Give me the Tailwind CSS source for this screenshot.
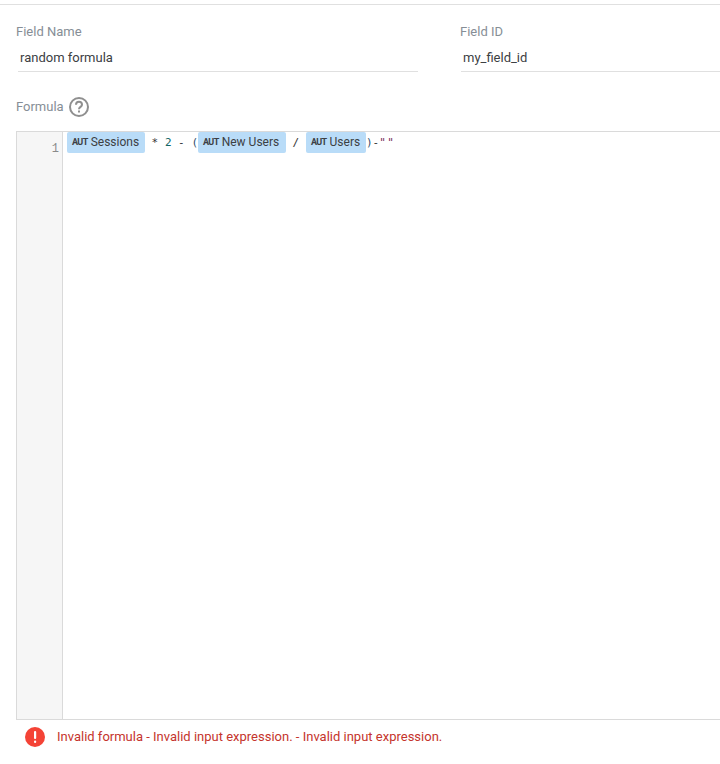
<!DOCTYPE html>
<html lang="en">
<head>
    <meta charset="UTF-8" />
    <title>Formula field</title>
    <script src="https://cdn.jsdelivr.net/npm/@tailwindcss/browser@4"></script>
</head>
<body class="bg-white h-[764px] w-[720px] overflow-hidden font-['Roboto',sans-serif]">

    <div class="h-[4px]"></div>
    <div class="h-px bg-[#e0e0e0]"></div>

    <!-- Name and ID fields -->
    <div class="flex pl-[16px] pt-[19px]">
        <div class="w-[444px]">
            <label class="block h-[16px] text-[13px] leading-[16px] text-[#868e96]">Field Name</label>
            <div class="ml-[2px] mt-[9px] w-[400px] h-[23px] pl-[2px] border-b border-[#e0e0e0] text-[13px] leading-[17px] text-[#3c4043]">random formula</div>
        </div>
        <div class="flex-1">
            <label class="block h-[16px] text-[13px] leading-[16px] text-[#868e96]">Field ID</label>
            <div class="ml-[1px] mt-[9px] h-[23px] pl-[2px] border-b border-[#e0e0e0] text-[13px] leading-[17px] text-[#3c4043]">my_field_id</div>
        </div>
    </div>

    <!-- Formula label -->
    <div class="flex items-center gap-[5px] pl-[16px] mt-[24px] h-[22px]">
        <span class="text-[13px] text-[#868e96]">Formula</span>
        <svg class="w-[22px] h-[22px]" viewBox="0 0 22 22" fill="none">
            <circle cx="10" cy="11" r="9" stroke="#8f8f8f" stroke-width="2" />
            <path d="M7 8.8a3 3 0 0 1 6 0c0 2-3 2.2-3 4.4" stroke="#8f8f8f" stroke-width="2" />
            <rect x="9" y="14.5" width="2" height="2" fill="#8f8f8f" />
        </svg>
    </div>

    <!-- Editor -->
    <div class="ml-[16px] mt-[13px] h-[589px] flex border-y border-l border-[#dadada]">
        <div class="w-[46px] bg-[#f6f6f6] border-r border-[#dadada] pt-[9px] pr-[3px] text-right font-['Liberation_Mono',monospace] text-[12px] leading-[16px] text-[#8a8a8a]">1</div>
        <div class="flex-1 flex items-start pl-[4px] whitespace-pre text-[11px] leading-[22px] font-['DejaVu_Sans_Mono',monospace] text-[#333]">
            <span class="flex items-start shrink-0 h-[21px] w-[78px] bg-[#b9dcf8] rounded-[2px] pl-[5px] font-['Roboto',sans-serif] text-[12px] leading-[20px] text-[#3c4043]">
                <span class="font-bold text-[9px] leading-[21px] tracking-[-0.6px] mr-[3px]">AUT</span><span>Sessions</span>
            </span>
            <span> * </span><span class="text-[#116666]">2</span><span> - </span><span class="text-[#2f4f6f]">(</span>
            <span class="flex items-start shrink-0 h-[21px] w-[88px] bg-[#b9dcf8] rounded-[2px] pl-[5px] font-['Roboto',sans-serif] text-[12px] leading-[20px] text-[#3c4043]">
                <span class="font-bold text-[9px] leading-[21px] tracking-[-0.6px] mr-[3px]">AUT</span><span>New Users</span>
            </span>
            <span> / </span>
            <span class="flex items-start shrink-0 h-[21px] w-[60px] bg-[#b9dcf8] rounded-[2px] pl-[5px] font-['Roboto',sans-serif] text-[12px] leading-[20px] text-[#3c4043]">
                <span class="font-bold text-[9px] leading-[21px] tracking-[-0.6px] mr-[3px]">AUT</span><span>Users</span>
            </span>
            <span class="text-[#2f4f6f]">)</span><span>-</span><span class="text-[#7a2a5a] tracking-[1.4px]">""</span>
        </div>
    </div>

    <!-- Error message -->
    <div class="flex items-center pl-[25px] mt-[7px] h-[20px]">
        <svg class="w-[20px] h-[20px]" viewBox="0 0 20 20">
            <circle cx="10" cy="10" r="10" fill="#f44336" />
            <rect x="9" y="4" width="2.2" height="8" rx="1" fill="#fff" />
            <rect x="9" y="13.5" width="2.2" height="2.4" rx="1" fill="#fff" />
        </svg>
        <span class="ml-[12px] text-[13px] text-[#c5342c]">Invalid formula - Invalid input expression. - Invalid input expression.</span>
    </div>

</body>
</html>
